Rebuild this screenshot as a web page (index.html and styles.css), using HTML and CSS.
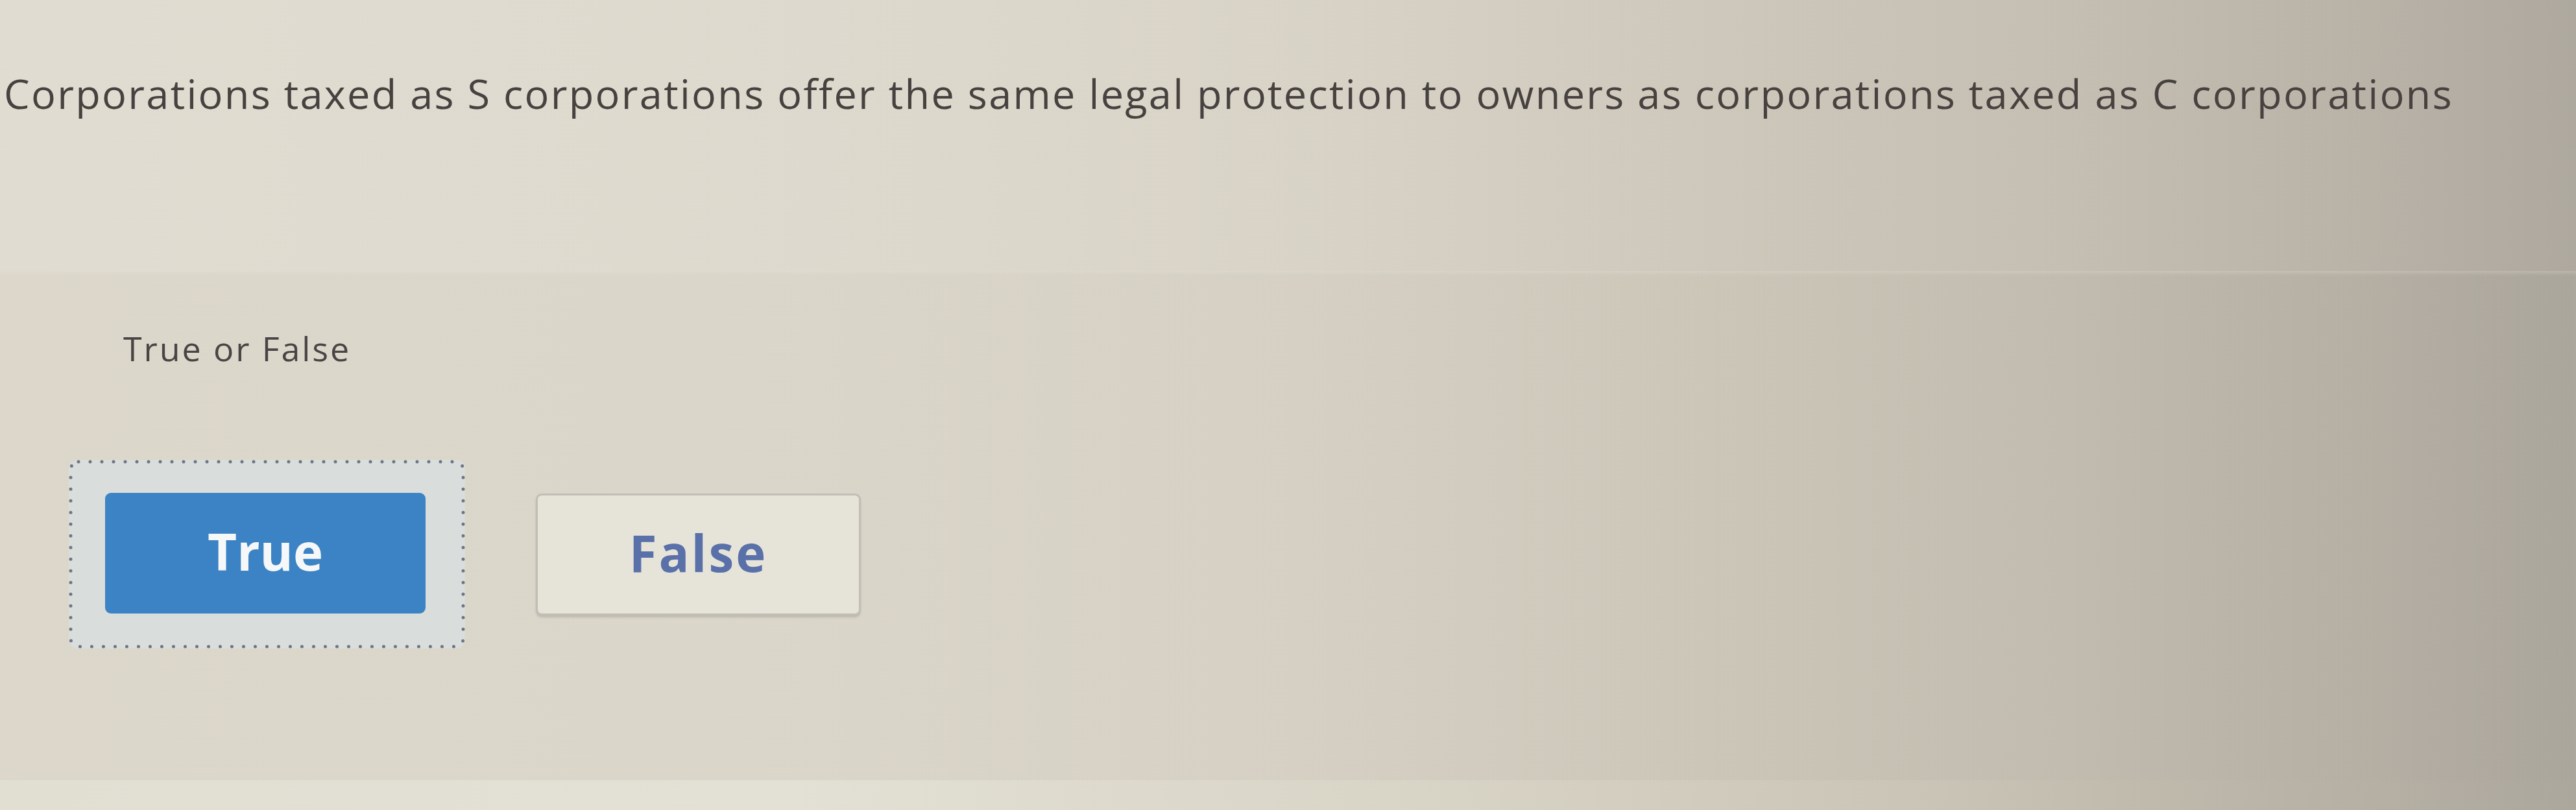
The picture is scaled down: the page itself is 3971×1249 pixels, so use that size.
FILE: index.html
```html
<!DOCTYPE html>
<html lang="en">
<head>
<meta charset="utf-8">
<title>True or False</title>
<link rel="stylesheet" href="styles.css">
</head>
<body>
<div class="page">
  <section class="prompt">
    <p class="prompt-text">Corporations taxed as S corporations offer the same legal protection to owners as corporations taxed as C corporations</p>
  </section>
  <section class="answer-panel">
    <p class="answer-label">True or False</p>
    <div class="choices">
      <div class="focus-ring">
        <button class="choice choice-selected" type="button">True</button>
      </div>
      <button class="choice choice-plain" type="button">False</button>
    </div>
  </section>
  <div class="footer-strip"></div>
</div>
</body>
</html>
```

FILE: styles.css
```css
html, body {
  margin: 0;
  padding: 0;
  height: 100%;
}

body {
  font-family: "Open Sans", "Lato", "Liberation Sans", sans-serif;
  color: #3d3a3a;
  background: linear-gradient(90deg, #ddd8cc 0%, #dcd7cb 30%, #d6d1c4 50%, #cdc7ba 65%, #c3bcb0 80%, #b5afa4 92%, #aba69c 100%);
  overflow: hidden;
}

.page {
  display: flex;
  flex-direction: column;
  height: 1249px;
}

.prompt {
  height: 418px;
  padding-top: 106px;
  box-sizing: border-box;
  background: linear-gradient(90deg, rgba(228,223,212,0.6) 0%, rgba(224,219,208,0.4) 40%, rgba(210,204,193,0.2) 70%, rgba(200,192,184,0.1) 100%);
}

.prompt-text {
  margin: 0;
  padding-left: 6px;
  font-size: 63px;
  line-height: 76px;
  color: #47423f;
  white-space: nowrap;
  letter-spacing: 2.3px;
}

.answer-panel {
  height: 785px;
  box-sizing: border-box;
  padding: 89px 0 0 106px;
  background: linear-gradient(90deg, rgba(220,214,202,0.5) 0%, rgba(215,210,198,0.3) 40%, rgba(200,194,180,0.2) 70%, rgba(170,165,155,0.2) 100%);
  box-shadow: inset 0 6px 8px -6px rgba(235,230,220,0.6);
}

.answer-label {
  margin: 0 0 142px 84px;
  font-size: 52px;
  line-height: 60px;
  color: #4a4545;
  letter-spacing: 2.9px;
}

.choices {
  display: flex;
  align-items: center;
  gap: 109px;
}

.focus-ring {
  width: 611px;
  height: 291px;
  box-sizing: border-box;
  padding: 51px 58px 54px 56px;
  border-radius: 14px;
  background-color: #d9dddb;
  background-image: url("data:image/svg+xml;utf8,<svg xmlns='http://www.w3.org/2000/svg' width='611' height='291'><rect x='3' y='3' width='605' height='285' rx='12' ry='12' fill='none' stroke='%236d7582' stroke-width='5' stroke-linecap='round' stroke-dasharray='0 18'/></svg>");
  background-repeat: no-repeat;
}

.choice {
  font-family: "Open Sans", "Lato", "Liberation Sans", sans-serif;
  font-weight: 700;
  font-size: 78px;
  line-height: 1;
  border-radius: 9px;
  cursor: pointer;
  padding: 0 0 6px;
}

.choice-selected {
  width: 494px;
  height: 186px;
  border: none;
  background: #3b83c4;
  color: #f5f7f8;
}

.choice-plain {
  width: 501px;
  height: 188px;
  border: 3px solid #c2beb6;
  background: #e6e3d9;
  color: #5970a9;
  letter-spacing: 3px;
  box-shadow: 0 3px 3px rgba(140,135,125,0.35);
}

.footer-strip {
  flex: 1;
  background: linear-gradient(90deg, #e1ded2 0%, #e3e1d5 30%, #d8d4c6 55%, #cac4b6 75%, #b8b2a6 90%, #aca79d 100%);
}
```
